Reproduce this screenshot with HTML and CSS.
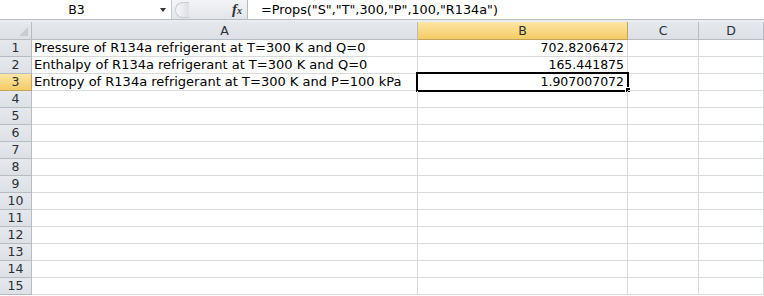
FILE: index.html
```html
<!DOCTYPE html>
<html lang="en">
<head>
    <meta charset="UTF-8">
    <title>Book1 - Props</title>
    <link rel="stylesheet" href="styles.css">
</head>
<body>
    <div class="formula-bar">
        <div class="name-box">
            <span class="name-text">B3</span>
            <span class="name-arrow"></span>
        </div>
        <div class="fx-area">
            <span class="grip"></span>
            <span class="fx">f<sub>x</sub></span>
        </div>
        <div class="formula-input">=Props("S","T",300,"P",100,"R134a")</div>
    </div>
    <div class="bar-gap"></div>

    <div class="sheet" id="sheet">
        <div class="corner"><span class="corner-tri"></span></div>
        <div class="col-head">A</div>
        <div class="col-head active">B</div>
        <div class="col-head">C</div>
        <div class="col-head">D</div>
    </div>

    <script>
        // Cell contents, row by row
        const data = [
            ['Pressure of R134a refrigerant at T=300 K and Q=0', '702.8206472'],
            ['Enthalpy of R134a refrigerant at T=300 K and Q=0', '165.441875'],
            ['Entropy of R134a refrigerant at T=300 K and P=100 kPa', '1.907007072']
        ];
        const sheet = document.getElementById('sheet');
        const rows = 15;

        for (let r = 1; r <= rows; r++) {
            const row = data[r - 1] || ['', ''];
            const head = document.createElement('div');
            head.className = 'row-head' + (r === 3 ? ' active' : '');
            head.textContent = r;
            sheet.appendChild(head);

            const a = document.createElement('div');
            a.className = 'cell';
            a.textContent = row[0];
            sheet.appendChild(a);

            const b = document.createElement('div');
            b.className = 'cell num' + (r === 3 ? ' selected' : '');
            b.textContent = row[1];
            if (r === 3) {
                const box = document.createElement('span');
                box.className = 'sel-box';
                const handle = document.createElement('span');
                handle.className = 'fill-handle';
                b.appendChild(box);
                b.appendChild(handle);
            }
            sheet.appendChild(b);

            for (let c = 0; c < 2; c++) {
                const empty = document.createElement('div');
                empty.className = 'cell';
                sheet.appendChild(empty);
            }
        }
    </script>
</body>
</html>
```

FILE: styles.css
```css
* {
    margin: 0;
    padding: 0;
    box-sizing: border-box;
}

body {
    width: 764px;
    height: 296px;
    overflow: hidden;
    background-color: #ffffff;
    font-family: 'DejaVu Sans', Verdana, sans-serif;
    font-size: 11px;
    color: #000000;
}

/* formula bar */
.formula-bar {
    display: flex;
    height: 20px;
    background-color: #e9ecf0;
    border-bottom: 1px solid #b9bcc1;
}

.name-box {
    width: 172px;
    position: relative;
    background-color: #ffffff;
    border-right: 1px solid #c6cad0;
    display: flex;
    align-items: center;
    justify-content: center;
    padding-right: 20px;
    font-size: 12.5px;
}

.name-text {
    margin-left: 2px;
}

.name-arrow {
    position: absolute;
    right: 5px;
    top: 8px;
    width: 0;
    height: 0;
    border-left: 3px solid transparent;
    border-right: 3px solid transparent;
    border-top: 4px solid #333333;
}

.fx-area {
    width: 76px;
    display: flex;
    align-items: center;
    justify-content: space-between;
    padding: 0 5px 0 3px;
    background: linear-gradient(#f3f4f6, #e2e5ea);
    border-right: 1px solid #b6bac0;
}

.grip {
    width: 14px;
    height: 16px;
    border-radius: 8px 0 0 8px;
    background: linear-gradient(90deg, #f6f7f9, #dcdfe4);
    border: 1px solid #c9ccd2;
    border-right: none;
}

.fx {
    font-family: 'Liberation Serif', 'DejaVu Serif', serif;
    font-style: italic;
    font-weight: bold;
    font-size: 15px;
    color: #333333;
    line-height: 1;
}

.fx sub {
    font-size: 10px;
    vertical-align: 0;
}

.formula-input {
    flex: 1;
    background-color: #ffffff;
    padding-left: 13px;
    font-size: 12.8px;
    line-height: 19px;
}

.bar-gap {
    height: 2px;
    background-color: #e9ecf0;
}

/* grid */
.sheet {
    display: grid;
    grid-template-columns: 32px 386px 210px 71px 65px;
    grid-auto-rows: 17px;
    grid-template-rows: 18px;
}

.corner,
.col-head,
.row-head {
    background: linear-gradient(#e5e8ec, #dde1e6);
    border-right: 1px solid #b8bcc2;
    border-bottom: 1px solid #b8bcc2;
    color: #2a2f36;
}

.corner {
    position: relative;
}

.corner-tri {
    position: absolute;
    right: 3px;
    bottom: 3px;
    width: 0;
    height: 0;
    border-left: 9px solid transparent;
    border-bottom: 9px solid #c8ccd2;
}

.col-head {
    text-align: center;
    font-size: 12.5px;
    line-height: 17px;
}

.row-head {
    text-align: center;
    font-size: 12.5px;
    line-height: 16px;
}

.col-head.active,
.row-head.active {
    background: linear-gradient(#fbe6a4, #f5cb66);
    border-right-color: #c2a35a;
    border-bottom-color: #c2a35a;
}

.cell {
    border-right: 1px solid #d8dadd;
    border-bottom: 1px solid #d8dadd;
    font-size: 13px;
    line-height: 16px;
    padding: 0 2px;
    white-space: nowrap;
    overflow: visible;
    position: relative;
}

.cell.num {
    text-align: right;
    padding-right: 3px;
    font-size: 12.5px;
}

.sel-box {
    position: absolute;
    left: -2px;
    top: -2px;
    width: 213px;
    height: 20px;
    border: 2px solid #000000;
}

.fill-handle {
    position: absolute;
    right: -4px;
    bottom: -3px;
    width: 6px;
    height: 6px;
    background-color: #000000;
    border: 1px solid #ffffff;
}
```
